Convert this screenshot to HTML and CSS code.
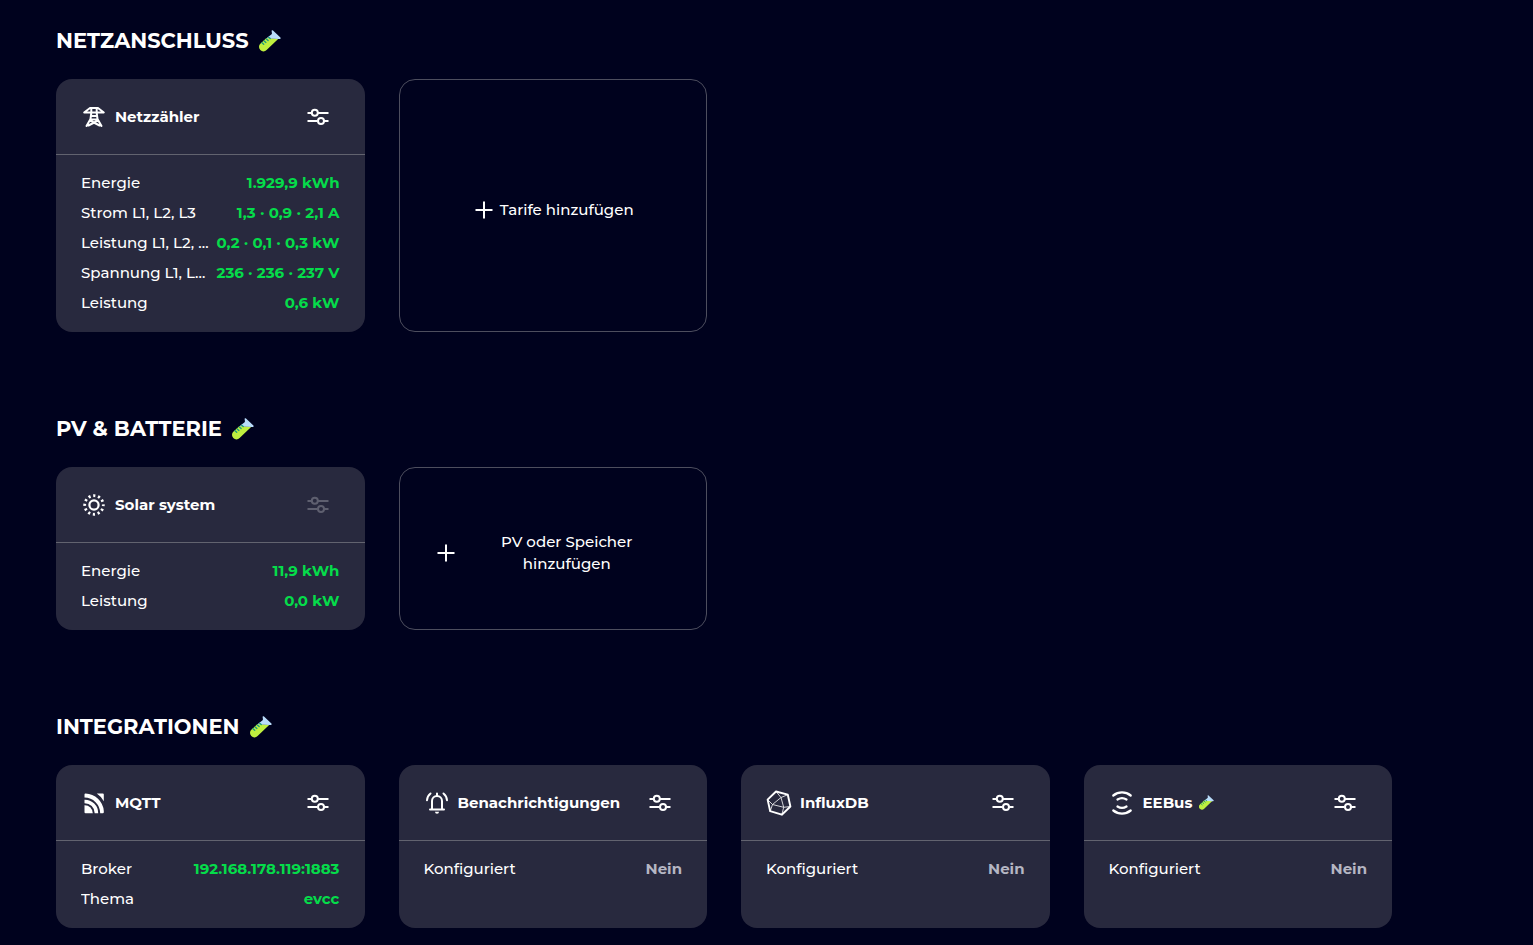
FILE: index.html
```html
<!DOCTYPE html>
<html lang="de">
<head>
    <meta charset="UTF-8">
    <meta name="viewport" content="width=device-width, initial-scale=1.0">
    <title>Konfiguration</title>
    <link rel="stylesheet" href="styles.css">
</head>
<body>
    <svg class="sprite" aria-hidden="true">
        <symbol id="tube" viewBox="0 0 22 22">
            <path d="M7.500 8L1.300 13.800a4.400 4.400 0 0 0 6.300 6.300L19.400 8.800z" fill="#bfef3f"/>
            <path d="M12.800 1.800c-.8-1 .3-1.900 1.200-1.200l7.400 7c.7.9-.2 1.800-1.200 1.400L19.400 9 7.500 8.300l5.400-4.300z" fill="#b9dcfb"/>
            <path d="M3 12.800l1.700 1.500M5.200 10.900l1.700 1.500M7.400 9l1.700 1.500M9.700 7.200l1.500 1.300" stroke="#1c9c7c" stroke-width="1.400" stroke-linecap="round"/>
        </symbol>
        <symbol id="sliders" viewBox="0 0 24 24">
            <g fill="none" stroke="currentColor" stroke-width="2">
                <path d="M1.500 8h4M11.500 8h11M1.500 16h10M17.500 16h5"/>
                <circle cx="8.800" cy="7.800" r="3"/>
                <circle cx="15" cy="16" r="3"/>
            </g>
        </symbol>
        <symbol id="plus" viewBox="0 0 24 24">
            <path d="M12 3.500v17M3.500 12h17" stroke="currentColor" stroke-width="2"/>
        </symbol>
    </svg>

    <main class="config">
        <section class="group">
            <h2 class="group-title">NETZANSCHLUSS <svg class="tube"><use href="#tube"/></svg></h2>
            <div class="cards">
                <article class="card">
                    <header class="card-head">
                        <svg class="icon" viewBox="0 0 24 24" fill="none" stroke="currentColor" stroke-width="2" stroke-linejoin="round" stroke-linecap="round">
                            <path d="M2.200 7.500L8 3h8l5.800 4.500zM9.300 3v5L8.500 14 4.500 21M14.700 3v5l.8 6 4 7M9 11h6M8.500 14.500h7M8 15.500l9.500 5M16 15.500l-9.500 5"/>
                        </svg>
                        <h3 class="card-title">Netzzähler</h3>
                        <button class="edit" aria-label="Netzzähler bearbeiten"><svg class="icon"><use href="#sliders"/></svg></button>
                    </header>
                    <dl class="values">
                        <div class="row"><dt>Energie</dt><dd>1.929,9 kWh</dd></div>
                        <div class="row"><dt>Strom L1, L2, L3</dt><dd>1,3 · 0,9 · 2,1 A</dd></div>
                        <div class="row"><dt>Leistung L1, L2, L3</dt><dd>0,2 · 0,1 · 0,3 kW</dd></div>
                        <div class="row"><dt>Spannung L1, L2, L3</dt><dd>236 · 236 · 237 V</dd></div>
                        <div class="row"><dt>Leistung</dt><dd>0,6 kW</dd></div>
                    </dl>
                </article>
                <button class="add"><svg class="icon"><use href="#plus"/></svg><span>Tarife hinzufügen</span></button>
            </div>
        </section>

        <section class="group">
            <h2 class="group-title">PV &amp; BATTERIE <svg class="tube"><use href="#tube"/></svg></h2>
            <div class="cards">
                <article class="card">
                    <header class="card-head">
                        <svg class="icon" viewBox="0 0 24 24" fill="none" stroke="currentColor" stroke-width="2.200">
                            <circle cx="12" cy="12" r="4.600"/>
                            <circle cx="12" cy="12" r="9.300" stroke-width="2.800" stroke-dasharray="2.200 2.670" stroke-dashoffset="1.100"/>
                        </svg>
                        <h3 class="card-title">Solar system</h3>
                        <button class="edit" aria-label="Solar system bearbeiten" disabled><svg class="icon"><use href="#sliders"/></svg></button>
                    </header>
                    <dl class="values">
                        <div class="row"><dt>Energie</dt><dd>11,9 kWh</dd></div>
                        <div class="row"><dt>Leistung</dt><dd>0,0 kW</dd></div>
                    </dl>
                </article>
                <button class="add"><svg class="icon"><use href="#plus"/></svg><span>PV oder Speicher hinzufügen</span></button>
            </div>
        </section>

        <section class="group">
            <h2 class="group-title">INTEGRATIONEN <svg class="tube"><use href="#tube"/></svg></h2>
            <div class="cards">
                <article class="card">
                    <header class="card-head">
                        <svg class="icon" viewBox="0 0 24 24" fill="currentColor">
                            <path d="M2.500 14.200a8 8 0 0 1 8.300 8H3.500a1 1 0 0 1-1-1z"/>
                            <path d="M2.500 8.700a13.400 13.400 0 0 1 13.700 13.500h-3.500a10 10 0 0 0-10.200-10z"/>
                            <path d="M2.500 3.500a1 1 0 0 1 1-1A19 19 0 0 1 21.800 20v1.200a1 1 0 0 1-1 1h-2.600A15.700 15.700 0 0 0 2.500 6.600z"/>
                            <path d="M14.800 2.500h6a1 1 0 0 1 1 1v6.800a21 21 0 0 0-7-7.800z"/>
                        </svg>
                        <h3 class="card-title">MQTT</h3>
                        <button class="edit" aria-label="MQTT bearbeiten"><svg class="icon"><use href="#sliders"/></svg></button>
                    </header>
                    <dl class="values">
                        <div class="row"><dt>Broker</dt><dd>192.168.178.119:1883</dd></div>
                        <div class="row"><dt>Thema</dt><dd>evcc</dd></div>
                    </dl>
                </article>
                <article class="card">
                    <header class="card-head">
                        <svg class="icon" viewBox="0 0 24 24" fill="none" stroke="currentColor" stroke-width="2" stroke-linecap="round">
                            <path d="M5 18.500h14M7 18.500V10a5 5 0 0 1 10 0v8.500M12 2.500v1.500M2 9.200A9.500 9.500 0 0 1 5.500 2.500M22 9.200a9.500 9.500 0 0 0-3.500-6.700"/>
                            <path d="M10 20.800h4a2 2 0 0 1-4 0z" fill="currentColor" stroke="none"/>
                        </svg>
                        <h3 class="card-title">Benachrichtigungen</h3>
                        <button class="edit" aria-label="Benachrichtigungen bearbeiten"><svg class="icon"><use href="#sliders"/></svg></button>
                    </header>
                    <dl class="values">
                        <div class="row"><dt>Konfiguriert</dt><dd class="off">Nein</dd></div>
                    </dl>
                </article>
                <article class="card">
                    <header class="card-head">
                        <svg class="icon" viewBox="0 0 24 24" fill="none" stroke="currentColor" stroke-linejoin="round" overflow="visible">
                            <path d="M9 .5l11.800 3.200L23.400 15.500l-8.600 8.200L3.200 20.200.6 8.600z" stroke-width="1.900"/>
                            <path d="M9 .5L14 6.500l6.800-2.800M14 6.500l2.700 9.800 6.700-.8M16.700 16.300l-1.900 7.400M16.700 16.300L5.500 13.500 14 6.500M5.500 13.500L.6 8.600M5.500 13.500l-2.300 6.700" stroke-width=".8"/>
                        </svg>
                        <h3 class="card-title">InfluxDB</h3>
                        <button class="edit" aria-label="InfluxDB bearbeiten"><svg class="icon"><use href="#sliders"/></svg></button>
                    </header>
                    <dl class="values">
                        <div class="row"><dt>Konfiguriert</dt><dd class="off">Nein</dd></div>
                    </dl>
                </article>
                <article class="card">
                    <header class="card-head">
                        <svg class="icon" viewBox="0 0 24 24" fill="none" stroke="currentColor" stroke-width="2.300" stroke-linecap="round">
                            <path d="M3.300 4.500a14 14 0 0 1 17.400 0M7.500 8.500a8.500 8.500 0 0 1 9 0M7.500 15.500a8.500 8.500 0 0 0 9 0M3.300 19.500a14 14 0 0 0 17.400 0"/>
                        </svg>
                        <h3 class="card-title">EEBus <svg class="tube tube-small"><use href="#tube"/></svg></h3>
                        <button class="edit" aria-label="EEBus bearbeiten"><svg class="icon"><use href="#sliders"/></svg></button>
                    </header>
                    <dl class="values">
                        <div class="row"><dt>Konfiguriert</dt><dd class="off">Nein</dd></div>
                    </dl>
                </article>
            </div>
        </section>
    </main>
</body>
</html>
```
FILE: styles.css
```css
* {
    margin: 0;
    padding: 0;
    box-sizing: border-box;
}
body {
    background-color: #00021e;
    color: #fff;
    font-family: Montserrat, Inter, sans-serif;
    font-size: 15px;
    font-weight: 500;
    line-height: 22px;
}
button {
    border: none;
    background: none;
    color: inherit;
    font: inherit;
    cursor: pointer;
}
.sprite {
    display: none;
}
.config {
    padding: 27px 141px 0 56px;
}
.group {
    margin-bottom: 83px;
}
.group:last-child {
    margin-bottom: 0;
}
.group-title {
    display: flex;
    align-items: center;
    gap: 10px;
    margin-bottom: 24px;
    font-size: 21px;
    font-weight: 700;
    line-height: 28px;
}
.tube {
    width: 22px;
    height: 22px;
}
.tube-small {
    width: 15px;
    height: 15px;
}
.cards {
    display: grid;
    grid-template-columns: repeat(auto-fill, minmax(280px, 1fr));
    gap: 34px;
}
.card {
    border-radius: 16px;
    background-color: #28293e;
}
.card-head {
    display: flex;
    align-items: center;
    gap: 9px;
    height: 76px;
    padding: 0 26px;
    border-bottom: 1px solid #62636f;
}
.icon {
    flex: none;
    width: 24px;
    height: 24px;
}
.card-title {
    display: flex;
    align-items: center;
    gap: 7px;
    flex: 1;
    font-size: 15px;
    font-weight: 700;
}
.edit {
    display: flex;
    padding: 9px;
}
.edit:disabled {
    opacity: 0.25;
    cursor: default;
}
.values {
    display: flex;
    flex-direction: column;
    gap: 8px;
    padding: 17px 25px 18px;
}
.row {
    display: flex;
    justify-content: space-between;
    gap: 8px;
}
.row dt {
    overflow: hidden;
    text-overflow: ellipsis;
    white-space: nowrap;
}
.row dd {
    flex: none;
    color: #05dc4a;
    font-weight: 700;
}
.row .off {
    color: #b5b6c3;
}
.add {
    display: flex;
    justify-content: center;
    align-items: center;
    gap: 4px;
    padding: 8px 34px 0;
    border: 1px solid #4d4e5e;
    border-radius: 16px;
}
```
